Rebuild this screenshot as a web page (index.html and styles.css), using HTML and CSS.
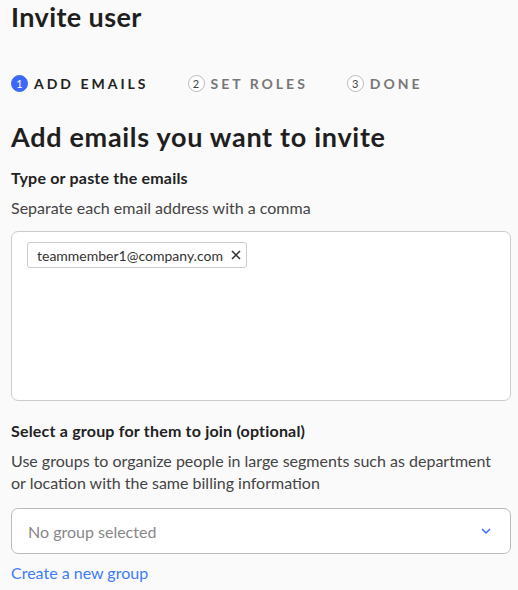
FILE: index.html
```html
<!DOCTYPE html>
<html>
<head>
<meta charset="utf-8">
<link rel="stylesheet" href="styles.css">
</head>
<body>
<div class="page">
  <h1 class="title">Invite user</h1>
  <ol class="steps">
    <li class="step active"><span class="num">1</span><span class="label">ADD EMAILS</span></li>
    <li class="step"><span class="num">2</span><span class="label">SET ROLES</span></li>
    <li class="step"><span class="num">3</span><span class="label">DONE</span></li>
  </ol>
  <h2 class="heading">Add emails you want to invite</h2>
  <div class="field-label">Type or paste the emails</div>
  <p class="help">Separate each email address with a comma</p>
  <div class="emails">
    <span class="chip">teammember1@company.com
      <svg class="x" width="10" height="10" viewBox="0 0 10 10"><path d="M1 1L9 9M9 1L1 9" stroke="#333" stroke-width="1.5" fill="none"/></svg>
    </span>
  </div>
  <div class="field-label second">Select a group for them to join (optional)</div>
  <p class="help narrow">Use groups to organize people in large segments such as department or location with the same billing information</p>
  <div class="select">
    <span class="placeholder">No group selected</span>
    <svg width="12" height="8" viewBox="0 0 12 8"><path d="M2 2L6 6L10 2" stroke="#3b6ef5" stroke-width="1.5" fill="none"/></svg>
  </div>
  <a class="link" href="#">Create a new group</a>
</div>
</body>
</html>
```
FILE: styles.css
```css
html, body {
  margin: 0;
  background: #fafafa;
}
body {
  font-family: Lato, "Open Sans", sans-serif;
  color: #222;
}
.page {
  padding: 0 7px 0 11px;
}
.title {
  margin: 0;
  padding-top: 1px;
  font-size: 27px;
  letter-spacing: 0.4px;
  font-weight: 700;
  line-height: 32px;
  color: #1f1f1f;
}
.steps {
  list-style: none;
  margin: 0;
  padding: 0;
  margin-top: 39px;
  display: flex;
  gap: 39px;
  height: 22px;
  align-items: center;
}
.step {
  display: flex;
  align-items: center;
  gap: 6px;
}
.num {
  width: 15px;
  height: 15px;
  border: 1px solid #bbb;
  border-radius: 50%;
  font-size: 11px;
  display: flex;
  align-items: center;
  justify-content: center;
  color: #444;
  background: #fff;
}
.step.active .num {
  background: #3d68f5;
  border-color: #3d68f5;
  color: #fff;
}
.label {
  font-size: 14px;
  font-weight: 700;
  letter-spacing: 3px;
  color: #777;
}
.step.active .label {
  color: #222;
}
.heading {
  margin: 26px 0 0;
  font-size: 27px;
  letter-spacing: 0.7px;
  line-height: 34px;
  font-weight: 700;
  color: #1f1f1f;
}
.field-label {
  margin-top: 13px;
  font-size: 16px;
  letter-spacing: 0.2px;
  font-weight: 700;
  line-height: 22px;
  color: #222;
}
.field-label.second {
  margin-top: 19px;
}
.help {
  margin: 8px 0 0;
  font-size: 16px;
  line-height: 22px;
  color: #444;
}
.help.narrow {
  max-width: 495px;
}
.emails {
  margin-top: 12px;
  height: 170px;
  border: 1px solid #ccc;
  border-radius: 7px;
  background: #fff;
  padding: 10px 15px;
  box-sizing: border-box;
}
.chip {
  display: inline-flex;
  align-items: center;
  gap: 8px;
  height: 26px;
  box-sizing: border-box;
  padding: 0 5px 0 9px;
  border: 1px solid #ccc;
  border-radius: 3px;
  font-size: 14px;
  color: #333;
}
.select {
  margin-top: 14px;
  height: 46px;
  box-sizing: border-box;
  border: 1px solid #bbb;
  border-radius: 7px;
  background: #fff;
  display: flex;
  align-items: center;
  justify-content: space-between;
  padding: 0 18px 0 16px;
}
.placeholder {
  font-size: 16px;
  color: #888;
}
.link {
  display: block;
  margin-top: 9px;
  font-size: 16px;
  color: #3d7bf7;
  text-decoration: none;
}
```
